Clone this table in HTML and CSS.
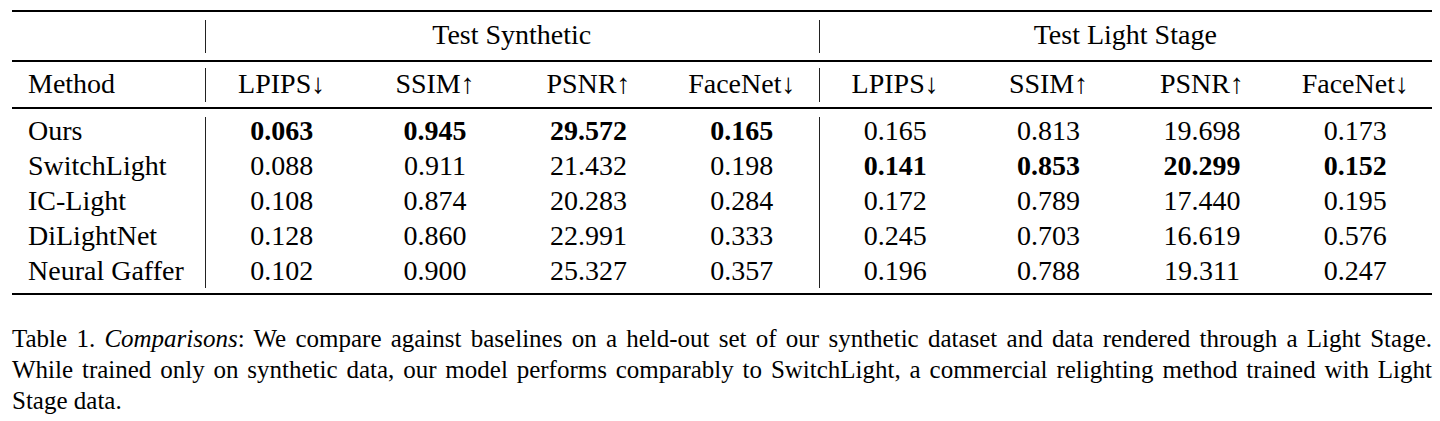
FILE: index.html
```html
<!DOCTYPE html>
<html lang="en">
<head>
<meta charset="utf-8">
<title>Table 1. Comparisons</title>
<link rel="stylesheet" href="styles.css">
</head>
<body>
<div class="figure">
  <div class="results" role="table" aria-label="Comparisons">
    <div class="c hA first"></div>
    <div class="c hA group bar">Test Synthetic</div>
    <div class="c hA group bar">Test Light Stage</div>

    <div class="c hB first">Method</div>
    <div class="c hB bar">LPIPS↓</div>
    <div class="c hB">SSIM↑</div>
    <div class="c hB">PSNR↑</div>
    <div class="c hB">FaceNet↓</div>
    <div class="c hB bar">LPIPS↓</div>
    <div class="c hB">SSIM↑</div>
    <div class="c hB">PSNR↑</div>
    <div class="c hB">FaceNet↓</div>

    <div class="c r1 first">Ours</div>
    <div class="c r1 bar b">0.063</div>
    <div class="c r1 b">0.945</div>
    <div class="c r1 b">29.572</div>
    <div class="c r1 b">0.165</div>
    <div class="c r1 bar">0.165</div>
    <div class="c r1">0.813</div>
    <div class="c r1">19.698</div>
    <div class="c r1">0.173</div>

    <div class="c first">SwitchLight</div>
    <div class="c bar">0.088</div>
    <div class="c">0.911</div>
    <div class="c">21.432</div>
    <div class="c">0.198</div>
    <div class="c bar b">0.141</div>
    <div class="c b">0.853</div>
    <div class="c b">20.299</div>
    <div class="c b">0.152</div>

    <div class="c first">IC-Light</div>
    <div class="c bar">0.108</div>
    <div class="c">0.874</div>
    <div class="c">20.283</div>
    <div class="c">0.284</div>
    <div class="c bar">0.172</div>
    <div class="c">0.789</div>
    <div class="c">17.440</div>
    <div class="c">0.195</div>

    <div class="c first">DiLightNet</div>
    <div class="c bar">0.128</div>
    <div class="c">0.860</div>
    <div class="c">22.991</div>
    <div class="c">0.333</div>
    <div class="c bar">0.245</div>
    <div class="c">0.703</div>
    <div class="c">16.619</div>
    <div class="c">0.576</div>

    <div class="c r5 first">Neural Gaffer</div>
    <div class="c r5 bar">0.102</div>
    <div class="c r5">0.900</div>
    <div class="c r5">25.327</div>
    <div class="c r5">0.357</div>
    <div class="c r5 bar">0.196</div>
    <div class="c r5">0.788</div>
    <div class="c r5">19.311</div>
    <div class="c r5">0.247</div>
  </div>

  <p class="caption">
    <span class="line">Table 1. <em>Comparisons</em>: We compare against baselines on a held-out set of our synthetic dataset and data rendered through a Light Stage.</span>
    <span class="line">While trained only on synthetic data, our model performs comparably to SwitchLight, a commercial relighting method trained with Light</span>
    <span class="line last">Stage data.</span>
  </p>
</div>
</body>
</html>
```

FILE: styles.css
```css
html, body {
  margin: 0;
  padding: 0;
  background: #fff;
}

body {
  font-family: "Liberation Serif", "Times New Roman", serif;
  color: #000;
}

.figure {
  width: 1420px;
  padding: 10px 0 0 12px;
}

.results {
  display: grid;
  grid-template-columns: 193px repeat(8, 1fr);
  grid-template-rows: 50px 47px 39px 35px 35px 35px 40px;
  border-top: 2px solid #000;
  border-bottom: 2px solid #000;
  font-size: 28px;
}

.c {
  box-sizing: border-box;
  display: flex;
  align-items: center;
  justify-content: center;
  white-space: nowrap;
  line-height: normal;
}

.c.first {
  justify-content: flex-start;
  padding-left: 16px;
}

.group {
  grid-column: span 4;
}

.hA {
  border-bottom: 2px solid #000;
  padding-bottom: 3px;
}

.hB {
  border-bottom: 2px solid #000;
  padding-bottom: 1px;
}

.r1 {
  padding-top: 4px;
}

.r5 {
  padding-bottom: 5px;
}

.b {
  font-weight: 700;
}

.bar {
  background-image: linear-gradient(#222, #222);
  background-repeat: no-repeat;
  background-position: left 0 top 0;
  background-size: 1px 100%;
}

.hA.bar {
  background-position: left 0 top 8px;
  background-size: 1px 33px;
}

.hB.bar {
  background-position: left 0 top 6px;
  background-size: 1px 34px;
}

.r1.bar {
  background-position: left 0 top 8px;
  background-size: 1px 31px;
}

.r5.bar {
  background-position: left 0 top 0;
  background-size: 1px 35px;
}

.caption {
  margin: 28px 0 0 0;
  font-size: 25px;
  line-height: 31px;
  text-align: justify;
}

.line {
  display: block;
  text-align: justify;
  text-align-last: justify;
}

.line.last {
  text-align-last: left;
}

.caption em {
  font-style: italic;
}
```
